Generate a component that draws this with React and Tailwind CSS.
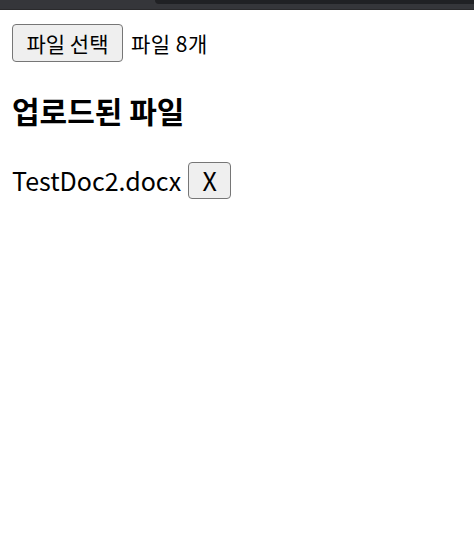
export default function App() {
  return (
    <div className="min-h-[540px] bg-white text-black font-['Noto_Sans_CJK_KR',_'Noto_Sans',_sans-serif]">
      {/* browser chrome strip */}
      <div className="h-[10px] bg-[#35363a] flex flex-col border-b border-[#2a2a2c]">
        <div className="flex h-[4px]">
          <div className="w-[155px]" />
          <div className="flex-1 bg-[#202124] rounded-bl-[6px]" />
        </div>
      </div>

      <div className="px-3 pt-[14px]">
        <div className="flex items-center gap-[8px] text-[21px]">
          <button className="h-[38px] w-[111px] bg-[#efefef] border border-[#767676] rounded-[4px] text-[21px] leading-none">
            파일 선택
          </button>
          <span className="leading-none tracking-[0.5px]">파일 8개</span>
        </div>

        <h3 className="mt-[30px] text-[30px] font-bold leading-[36px]">업로드된 파일</h3>

        <div className="mt-[34px] flex items-center gap-[7px]">
          <span className="text-[25px] leading-none">TestDoc2.docx</span>
          <button className="h-[37px] w-[43px] bg-[#efefef] border border-[#767676] rounded-[4px] text-[25px] leading-none">
            X
          </button>
        </div>
      </div>
    </div>
  )
}
